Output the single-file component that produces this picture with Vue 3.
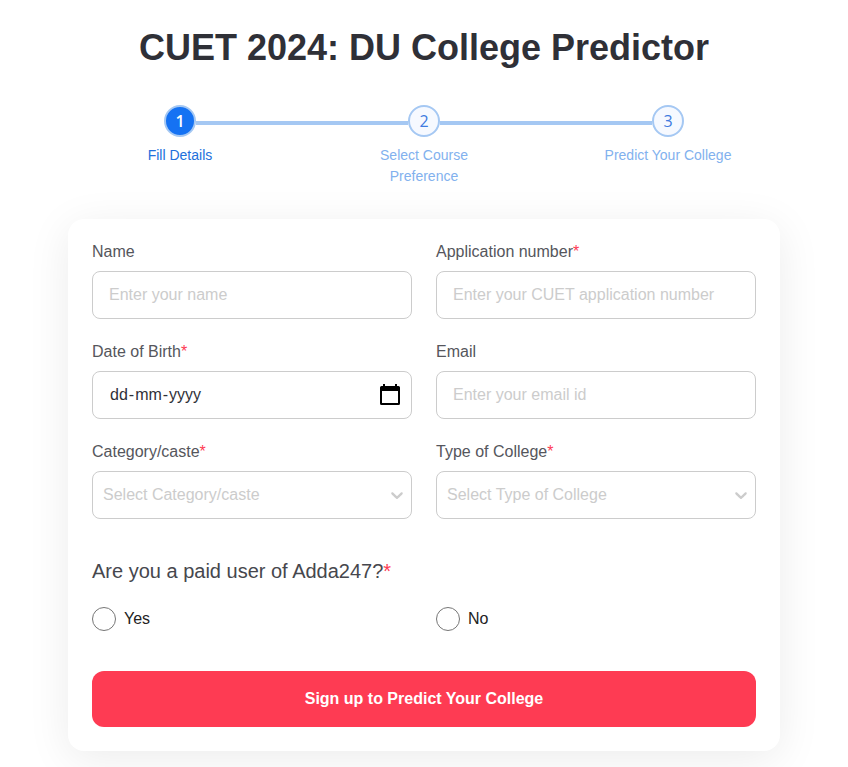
<template>
    <div class="page">
        <h1 class="title">CUET 2024: DU College Predictor</h1>
        <!-- STEPPER -->
        <div class="stepper">
            <div
                v-for="(step, index) in steps"
                :key="step"
                class="step"
                :class="{ active: index === currentStep }"
            >
                <div class="stepHead">
                    <span class="line" :class="{ hidden: index === 0 }"></span>
                    <span class="circle">{{ index + 1 }}</span>
                    <span
                        class="line"
                        :class="{ hidden: index === steps.length - 1 }"
                    ></span>
                </div>
                <p class="stepLabel">{{ step }}</p>
            </div>
        </div>
        <!-- FORM -->
        <form class="card" @submit.prevent>
            <div class="fields">
                <div v-for="field in fields" :key="field.id" class="field">
                    <label :for="field.id"
                        >{{ field.label
                        }}<span v-if="field.required" class="required"
                            >*</span
                        ></label
                    >
                    <input
                        v-if="field.type === 'text'"
                        :id="field.id"
                        v-model="form[field.id]"
                        class="box"
                        type="text"
                        :placeholder="field.placeholder"
                    />
                    <div
                        v-if="field.type === 'date'"
                        :id="field.id"
                        class="box date"
                        tabindex="0"
                    >
                        <span class="dateText"
                            ><span>dd</span><span>-</span><span>mm</span
                            ><span>-</span><span>yyyy</span></span
                        >
                        <svg width="20" height="22" viewBox="0 0 20 22">
                            <path
                                fill="#000"
                                fill-rule="evenodd"
                                d="M3 0h2v2h10V0h2v2h1.500a1.500 1.500 0 0 1 1.500 1.500v16a1.500 1.500 0 0 1-1.500 1.500h-17A1.500 1.500 0 0 1 0 19.500v-16A1.500 1.500 0 0 1 1.500 2H3zM2 7v12h16V7z"
                            />
                        </svg>
                    </div>
                    <div
                        v-if="field.type === 'select'"
                        :id="field.id"
                        class="box select"
                        tabindex="0"
                    >
                        <span>{{ field.placeholder }}</span>
                        <svg width="20" height="20" viewBox="0 0 20 20">
                            <path
                                fill="#ccc"
                                d="M4.516 7.548c0.436-0.446 1.043-0.481 1.576 0l3.908 3.747 3.908-3.747c0.533-0.481 1.141-0.446 1.574 0 0.436 0.445 0.408 1.197 0 1.615-0.406 0.418-4.695 4.502-4.695 4.502-0.217 0.223-0.502 0.335-0.787 0.335s-0.570-0.112-0.789-0.335c0 0-4.287-4.084-4.695-4.502s-0.436-1.170 0-1.615z"
                            />
                        </svg>
                    </div>
                </div>
            </div>
            <p class="question">
                Are you a paid user of Adda247?<span class="required">*</span>
            </p>
            <div class="options">
                <label v-for="option in ['Yes', 'No']" :key="option">
                    <input
                        v-model="form.paidUser"
                        type="radio"
                        name="paidUser"
                        :value="option"
                    />
                    {{ option }}
                </label>
            </div>
            <button type="submit">Sign up to Predict Your College</button>
        </form>
    </div>
</template>

<script setup>
import { reactive, ref } from "vue";

const currentStep = ref(0);
const steps = [
    "Fill Details",
    "Select Course Preference",
    "Predict Your College",
];

const form = reactive({
    name: "",
    application: "",
    email: "",
    paidUser: "",
});

const fields = [
    {
        id: "name",
        label: "Name",
        type: "text",
        placeholder: "Enter your name",
    },
    {
        id: "application",
        label: "Application number",
        type: "text",
        placeholder: "Enter your CUET application number",
        required: true,
    },
    { id: "dob", label: "Date of Birth", type: "date", required: true },
    {
        id: "email",
        label: "Email",
        type: "text",
        placeholder: "Enter your email id",
    },
    {
        id: "category",
        label: "Category/caste",
        type: "select",
        placeholder: "Select Category/caste",
        required: true,
    },
    {
        id: "college",
        label: "Type of College",
        type: "select",
        placeholder: "Select Type of College",
        required: true,
    },
];
</script>

<style>
body {
    background: #fff;
    overflow: hidden;
}
</style>

<style scoped>
.page {
    box-sizing: border-box;
    height: 767px;
    padding-top: 26px;
    overflow: hidden;
    font-family: "Liberation Sans", Arial, sans-serif;
    font-size: 16px;
    color: #2f3037;
}
.title {
    margin: 0 0 35px;
    font-size: 36px;
    line-height: 44px;
    text-align: center;
}

.stepper {
    display: flex;
    width: 732px;
    height: 114px;
    margin: 0 auto;
}
.step {
    flex: 1;
}
.stepHead {
    display: flex;
    align-items: center;
}
.line {
    flex: 1;
    height: 4px;
    margin-top: 4px;
    background: #a5c8f3;
}
.line.hidden {
    visibility: hidden;
}
.circle {
    box-sizing: border-box;
    width: 32px;
    height: 32px;
    border: 2px solid #a5c8f3;
    border-radius: 50%;
    background: #f6f9ff;
    color: #3f7be0;
    font-family: "Open Sans", sans-serif;
    line-height: 28px;
    text-align: center;
}
.stepLabel {
    width: 130px;
    margin: 8px auto 0;
    color: #82b1ee;
    font-size: 14px;
    line-height: 21px;
    text-align: center;
}
.active .circle {
    background: #1572f3;
    color: #fff;
    font-weight: 600;
}
.active .stepLabel {
    color: #2270dc;
}

.card {
    box-sizing: border-box;
    width: 712px;
    height: 532px;
    margin: 0 auto;
    padding: 24px;
    border-radius: 16px;
    background: #fff;
    box-shadow: 0 8px 44px rgba(0, 0, 0, 0.08);
}
.fields {
    display: grid;
    grid-template-columns: 1fr 1fr;
    gap: 24px;
}
.field > label {
    display: block;
    height: 18px;
    margin-bottom: 10px;
    color: #55565c;
    line-height: 18px;
}
.required {
    color: #fe3b53;
}
.box {
    box-sizing: border-box;
    display: flex;
    align-items: center;
    justify-content: space-between;
    width: 100%;
    height: 48px;
    padding: 0 16px;
    border: 1px solid #ccc;
    border-radius: 8px;
    background: #fff;
    color: #2f3037;
    font: inherit;
    outline: none;
}
.box::placeholder {
    color: #ccc;
    opacity: 1;
}
.date {
    padding-right: 11px;
}
.dateText {
    display: flex;
}
.dateText span:nth-child(odd) {
    padding: 0 1px;
}
.select {
    padding: 0 4px 0 10px;
    color: #ccc;
}

.question {
    margin: 40px 0 24px;
    color: #46474d;
    font-size: 20px;
    line-height: 24px;
}
.options {
    display: grid;
    grid-template-columns: 1fr 1fr;
    column-gap: 24px;
    margin-bottom: 40px;
}
.options label {
    display: flex;
    align-items: center;
    gap: 8px;
    color: #222;
}
.options input {
    appearance: none;
    box-sizing: border-box;
    width: 24px;
    height: 24px;
    margin: 0;
    border: 1px solid #767676;
    border-radius: 50%;
}
.options input:checked {
    border: 7px solid #1572f3;
}
button {
    display: block;
    width: 100%;
    height: 56px;
    border: none;
    border-radius: 12px;
    background: #fe3b53;
    color: #fff;
    font: inherit;
    font-weight: bold;
    cursor: pointer;
}
</style>
